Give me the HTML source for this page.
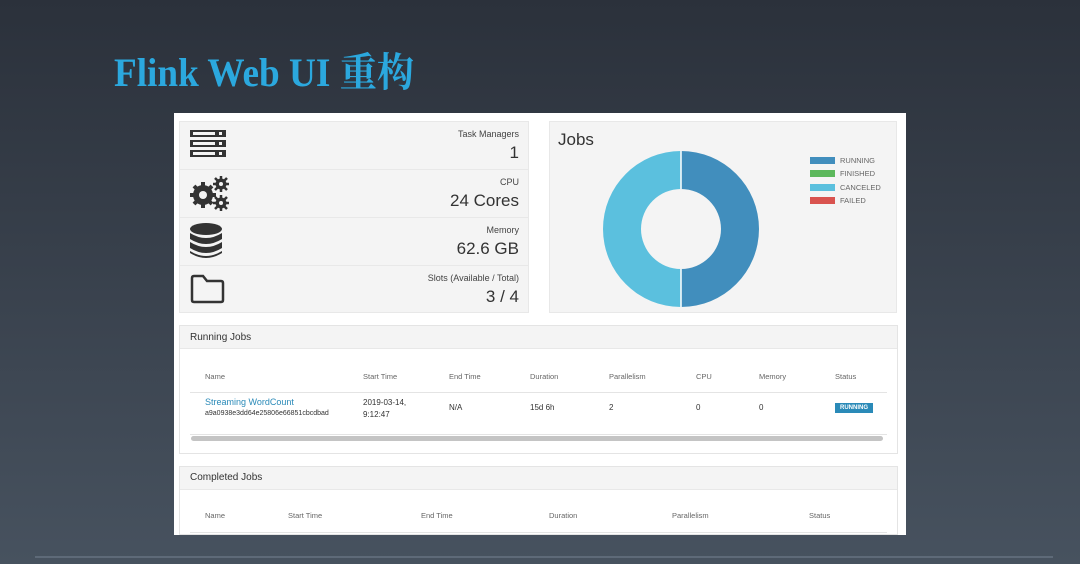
<!DOCTYPE html>
<html><head><meta charset="utf-8"><style>
*{margin:0;padding:0;box-sizing:border-box}
body{width:1080px;height:564px;overflow:hidden;background:linear-gradient(#2b313b,#47525f);font-family:"Liberation Sans",Arial,sans-serif;position:relative}
.a{position:absolute}
.title{left:114px;top:41px;font:bold 40px "Liberation Serif","Noto Serif CJK SC",serif;color:#2ba8de;white-space:nowrap;transform:scaleX(0.93);transform-origin:left top}
.shot{left:174px;top:113px;width:732px;height:422px;background:#fff}
.panel{background:#f4f4f4;border:1px solid #e8e8e8}
.row{position:absolute;left:0;width:349px;height:48px;border-bottom:1px solid #e8e8e8}
.lab{position:absolute;right:10px;top:7px;font-size:9px;color:#444}
.val{position:absolute;right:10px;top:21px;font-size:17px;color:#333}
.th{position:absolute;font-size:7.5px;color:#666}
.td{position:absolute;font-size:8px;color:#333}
.lg{position:absolute;left:810px;width:25px;height:7px}
.lt{position:absolute;left:840px;font-size:7.5px;color:#666}
</style></head><body>
<div class="a title">Flink Web UI 重构</div>
<div class="a shot"></div>
<div class="a panel" style="left:179px;top:121px;width:350px;height:192px">
 <div class="row" style="top:0"><div class="lab">Task Managers</div><div class="val">1</div>
  <svg class="a" style="left:10px;top:8px" width="38" height="28"><g fill="#333"><rect x="0" y="0" width="36" height="7"/><rect x="0" y="10" width="36" height="7"/><rect x="0" y="20" width="36" height="7"/></g><g fill="#f4f4f4"><rect x="3" y="2" width="22" height="3"/><rect x="3" y="12" width="22" height="3"/><rect x="3" y="22" width="22" height="3"/><rect x="29" y="2" width="3" height="3"/><rect x="29" y="12" width="3" height="3"/><rect x="29" y="22" width="3" height="3"/></g></svg></div>
 <div class="row" style="top:48px"><div class="lab">CPU</div><div class="val">24 Cores</div>
  <svg class="a" style="left:10px;top:6px" width="40" height="36"><g fill="#333"><circle cx="13" cy="19" r="10"/><circle cx="31" cy="8" r="5.5"/><circle cx="31" cy="27" r="5.5"/></g><g stroke="#333" stroke-width="4"><path d="M13 6v26M0 19h26M4 10l18 18M22 10L4 28"/></g><g stroke="#333" stroke-width="2.5"><path d="M31 0v16M23 8h16M25 2l12 12M37 2L25 14M31 19v16M23 27h16M25 21l12 12M37 21L25 33"/></g><g fill="#f4f4f4"><circle cx="13" cy="19" r="4"/><circle cx="31" cy="8" r="2"/><circle cx="31" cy="27" r="2"/></g></svg></div>
 <div class="row" style="top:96px"><div class="lab">Memory</div><div class="val">62.6 GB</div>
  <svg class="a" style="left:10px;top:5px" width="34" height="36"><g fill="#333"><ellipse cx="16" cy="6" rx="16" ry="6"/><path d="M0 10q16 10 32 0v6q-16 10-32 0z"/><path d="M0 19q16 10 32 0v6q-16 10-32 0z"/><path d="M0 28q16 10 32 0v2q-16 10-32 0z"/></g></svg></div>
 <div class="row" style="top:144px;border:none"><div class="lab">Slots (Available / Total)</div><div class="val">3 / 4</div>
  <svg class="a" style="left:10px;top:8px" width="36" height="30"><path d="M2 4q0-2 2-2h9l4 5h14q2 0 2 2v17q0 2-2 2H4q-2 0-2-2z" fill="none" stroke="#333" stroke-width="2.5"/></svg></div>
</div>
<div class="a panel" style="left:549px;top:121px;width:348px;height:192px"></div>
<div class="a" style="left:558px;top:130px;font-size:17px;color:#333">Jobs</div>
<svg class="a" style="left:599px;top:151px" width="164" height="156"><g transform="translate(82,78)"><path d="M0-78A78 78 0 0 1 0 78V40A40 40 0 0 0 0-40z" fill="#418ebd"/><path d="M0-78A78 78 0 0 0 0 78V40A40 40 0 0 1 0-40z" fill="#5bc0de"/><path d="M0-78V-40M0 40V78" stroke="#fff" stroke-width="1.5"/></g></svg>
<div class="lg" style="top:157px;background:#418ebd"></div><div class="lt" style="top:156px">RUNNING</div>
<div class="lg" style="top:170px;background:#5cb85c"></div><div class="lt" style="top:169px">FINISHED</div>
<div class="lg" style="top:184px;background:#5bc0de"></div><div class="lt" style="top:183px">CANCELED</div>
<div class="lg" style="top:197px;background:#d9534f"></div><div class="lt" style="top:196px">FAILED</div>

<div class="a" style="left:179px;top:325px;width:719px;height:129px;border:1px solid #e4e4e4;background:#fff"></div>
<div class="a" style="left:180px;top:326px;width:717px;height:23px;background:#f4f4f4;border-bottom:1px solid #e8e8e8"></div>
<div class="a" style="left:190px;top:332px;font-size:10px;color:#333">Running Jobs</div>
<div class="th" style="left:205px;top:372px">Name</div><div class="th" style="left:363px;top:372px">Start Time</div><div class="th" style="left:449px;top:372px">End Time</div><div class="th" style="left:530px;top:372px">Duration</div><div class="th" style="left:609px;top:372px">Parallelism</div><div class="th" style="left:696px;top:372px">CPU</div><div class="th" style="left:759px;top:372px">Memory</div><div class="th" style="left:835px;top:372px">Status</div>
<div class="a" style="left:190px;top:392px;width:697px;height:1px;background:#e4e4e4"></div>
<div class="td" style="left:205px;top:397px;font-size:9px;color:#2a8ab8">Streaming WordCount</div>
<div class="td" style="left:205px;top:410px;font-size:7px">a9a0938e3dd64e25806e66851cbcdbad</div>
<div class="td" style="left:363px;top:397px;line-height:12px">2019-03-14,<br>9:12:47</div>
<div class="td" style="left:449px;top:403px">N/A</div><div class="td" style="left:530px;top:403px">15d 6h</div><div class="td" style="left:609px;top:403px">2</div><div class="td" style="left:696px;top:403px">0</div><div class="td" style="left:759px;top:403px">0</div>
<div class="a" style="left:835px;top:403px;width:38px;height:10px;background:#2a8ab8;color:#fff;font-size:6px;font-weight:bold;text-align:center;line-height:10px">RUNNING</div>
<div class="a" style="left:190px;top:434px;width:697px;height:1px;background:#e4e4e4"></div>
<div class="a" style="left:191px;top:436px;width:692px;height:5px;border-radius:3px;background:#c4c4c4"></div>

<div class="a" style="left:179px;top:466px;width:719px;height:69px;border:1px solid #e4e4e4;background:#fff"></div>
<div class="a" style="left:180px;top:467px;width:717px;height:23px;background:#f4f4f4;border-bottom:1px solid #e8e8e8"></div>
<div class="a" style="left:190px;top:472px;font-size:10px;color:#333">Completed Jobs</div>
<div class="th" style="left:205px;top:511px">Name</div><div class="th" style="left:288px;top:511px">Start Time</div><div class="th" style="left:421px;top:511px">End Time</div><div class="th" style="left:549px;top:511px">Duration</div><div class="th" style="left:672px;top:511px">Parallelism</div><div class="th" style="left:809px;top:511px">Status</div>
<div class="a" style="left:190px;top:532px;width:697px;height:1px;background:#e4e4e4"></div>
<div class="a" style="left:35px;top:556px;width:1018px;height:2px;background:#5e6a78"></div>
</body></html>
